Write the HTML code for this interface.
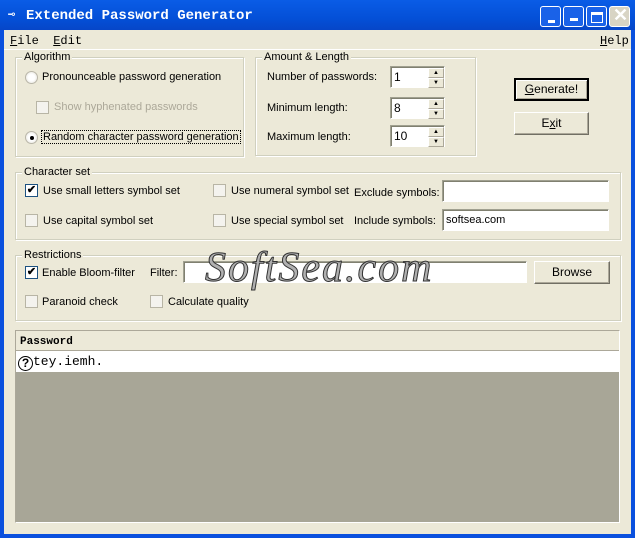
<!DOCTYPE html>
<html><head><style>
*{margin:0;padding:0;box-sizing:border-box}
body{width:635px;height:538px;background:#0a50de;position:relative;overflow:hidden;font-family:"Liberation Sans",sans-serif;font-size:11px;color:#000}
.a{position:absolute}
#title{left:0;top:0;width:635px;height:30px;background:linear-gradient(#0a5ce6,#0450d8 60%,#0646c8);}
#body{left:4px;top:30px;width:627px;height:504px;background:#ece9d8}
.tb{font-family:"Liberation Mono",monospace;font-weight:bold;color:#fff;font-size:14px}
.grp{position:absolute;border:1px solid #d0d0bf;box-shadow:inset 1px 1px 0 #fff,1px 1px 0 #fff}
.grp>span{position:absolute;top:-8px;left:6px;background:#ece9d8;padding:0 2px;line-height:14px}
.cb{position:absolute;width:13px;height:13px;border:1px solid #1c5180;background:#fff}
.cb.off{border-color:#b8b5a5;background:#f4f3ee}
.rd{position:absolute;width:13px;height:13px;border-radius:50%;border:1px solid #b9b6a8;background:radial-gradient(#fff 40%,#e0ded4)}
.ed{position:absolute;background:#fff;border:1px solid #7f9db9;border-color:#a0a090 #fff #fff #a0a090;box-shadow:inset 1px 1px 0 #808070}
.btn{position:absolute;background:#ece9d8;border:1px solid;border-color:#fff #716f64 #716f64 #fff;box-shadow:inset -1px -1px 0 #aca899;text-align:center;font-size:12px}
.sp{position:absolute;width:16px;height:10px;background:#ece9d8;border:1px solid;border-color:#fff #aca899 #aca899 #fff;font-size:6px;line-height:8px;text-align:center}
.wb{position:absolute;top:6px;width:21px;height:21px;border:1px solid #fff;border-radius:3px;background:#1a62e8}
</style></head><body>
<div id="title" class="a">
 <div class="a tb" style="left:8px;top:7px;font-size:12px">⊸</div>
 <div class="a tb" style="left:26px;top:8px">Extended Password Generator</div>
 <div class="wb" style="left:540px"><div class="a" style="left:7px;top:13px;width:7px;height:3px;background:#fff"></div></div>
 <div class="wb" style="left:563px"><div class="a" style="left:6px;top:11px;width:8px;height:3px;background:#fff"></div></div>
 <div class="wb" style="left:586px"><div class="a" style="left:4px;top:5px;width:12px;height:11px;border:1px solid #fff;border-top-width:3px"></div></div>
 <div class="wb" style="left:609px;background:#d8d4c4;border-color:#fff"><div class="a" style="left:3px;top:-2px;color:#fff;font-size:18px;font-weight:bold">✕</div></div>
</div>
<div id="body" class="a">
 <div class="a" style="left:0;top:19px;width:627px;height:1px;background:#fff"></div>
</div>
<div class="a" style="left:10px;top:34px;font-family:'Liberation Mono',monospace;font-size:12px"><u>F</u>ile &nbsp;<u>E</u>dit</div>
<div class="a" style="left:600px;top:34px;font-family:'Liberation Mono',monospace;font-size:12px"><u>H</u>elp</div>

<div class="grp" style="left:15px;top:57px;width:229px;height:100px"><span>Algorithm</span></div>
<div class="rd" style="left:25px;top:71px"></div>
<div class="a" style="left:42px;top:71px">Pronounceable password generation</div>
<div class="cb off" style="left:36px;top:101px"></div>
<div class="a" style="left:54px;top:101px;color:#aca899">Show hyphenated passwords</div>
<div class="rd" style="left:25px;top:131px"><div class="a" style="left:4px;top:4px;width:4px;height:4px;border-radius:50%;background:#000"></div></div>
<div class="a" style="left:41px;top:130px;border:1px dotted #000;padding:0 1px">Random character password generation</div>

<div class="grp" style="left:255px;top:57px;width:221px;height:99px"><span>Amount &amp; Length</span></div>
<div class="a" style="left:267px;top:71px">Number of passwords:</div>
<div class="a" style="left:267px;top:102px">Minimum length:</div>
<div class="a" style="left:267px;top:131px">Maximum length:</div>
<div class="ed" style="left:390px;top:66px;width:55px;height:22px;padding:3px 3px;font-size:12px">1</div>
<div class="ed" style="left:390px;top:97px;width:55px;height:22px;padding:3px 3px;font-size:12px">8</div>
<div class="ed" style="left:390px;top:125px;width:55px;height:22px;padding:3px 3px;font-size:12px">10</div>
<div class="sp" style="left:428px;top:68px">▲</div><div class="sp" style="left:428px;top:78px">▼</div>
<div class="sp" style="left:428px;top:99px">▲</div><div class="sp" style="left:428px;top:109px">▼</div>
<div class="sp" style="left:428px;top:127px">▲</div><div class="sp" style="left:428px;top:137px">▼</div>

<div class="btn" style="left:514px;top:78px;width:75px;height:23px;border:2px solid #000;box-shadow:inset 1px 1px 0 #fff,inset -1px -1px 0 #aca899;line-height:19px"><u>G</u>enerate!</div>
<div class="btn" style="left:514px;top:112px;width:75px;height:23px;line-height:21px">E<u>x</u>it</div>

<div class="grp" style="left:15px;top:172px;width:606px;height:68px"><span>Character set</span></div>
<div class="cb" style="left:25px;top:184px;font-size:11px;line-height:11px;text-align:center;font-weight:bold">✔</div>
<div class="a" style="left:43px;top:185px">Use small letters symbol set</div>
<div class="cb off" style="left:25px;top:214px"></div>
<div class="a" style="left:43px;top:215px">Use capital symbol set</div>
<div class="cb off" style="left:213px;top:184px"></div>
<div class="a" style="left:231px;top:185px">Use numeral symbol set</div>
<div class="cb off" style="left:213px;top:214px"></div>
<div class="a" style="left:231px;top:215px">Use special symbol set</div>
<div class="a" style="left:354px;top:187px">Exclude symbols:</div>
<div class="a" style="left:354px;top:215px">Include symbols:</div>
<div class="ed" style="left:442px;top:180px;width:167px;height:22px"></div>
<div class="ed" style="left:442px;top:209px;width:167px;height:22px;padding:4px 3px">softsea.com</div>

<div class="grp" style="left:15px;top:255px;width:606px;height:66px"><span>Restrictions</span></div>
<div class="cb" style="left:25px;top:266px;font-size:11px;line-height:11px;text-align:center;font-weight:bold">✔</div>
<div class="a" style="left:42px;top:267px">Enable Bloom-filter</div>
<div class="a" style="left:150px;top:267px">Filter:</div>
<div class="ed" style="left:183px;top:261px;width:344px;height:22px"></div>
<div class="btn" style="left:534px;top:261px;width:76px;height:23px;line-height:21px">Browse</div>
<div class="cb off" style="left:25px;top:295px"></div>
<div class="a" style="left:42px;top:296px">Paranoid check</div>
<div class="cb off" style="left:150px;top:295px"></div>
<div class="a" style="left:168px;top:296px">Calculate quality</div>

<div class="a" style="left:205px;top:244px;font-family:'Liberation Serif',serif;font-style:italic;font-size:42px;color:#b0b0b0;-webkit-text-stroke:1px #333;letter-spacing:2px">SoftSea.com</div>

<div class="a" style="left:15px;top:330px;width:605px;height:193px;background:#a8a697;border:1px solid #fff;border-color:#aca899 #fff #fff #aca899">
 <div class="a" style="left:0;top:0;width:603px;height:20px;background:#ece9d8;border-bottom:1px solid #aca899;font-family:'Liberation Mono',monospace;font-weight:bold;font-size:11px;padding:5px 4px">Password</div>
 <div class="a" style="left:0;top:20px;width:603px;height:21px;background:#fff;font-family:'Liberation Mono',monospace;font-size:13px;padding:3px 2px"><span style="display:inline-block;width:15px;height:15px;border:1.5px solid #000;border-radius:50%;font-family:'Liberation Sans';font-weight:bold;font-size:12px;line-height:12px;text-align:center;vertical-align:-2px">?</span>tey.iemh.</div>
</div>
</body></html>
